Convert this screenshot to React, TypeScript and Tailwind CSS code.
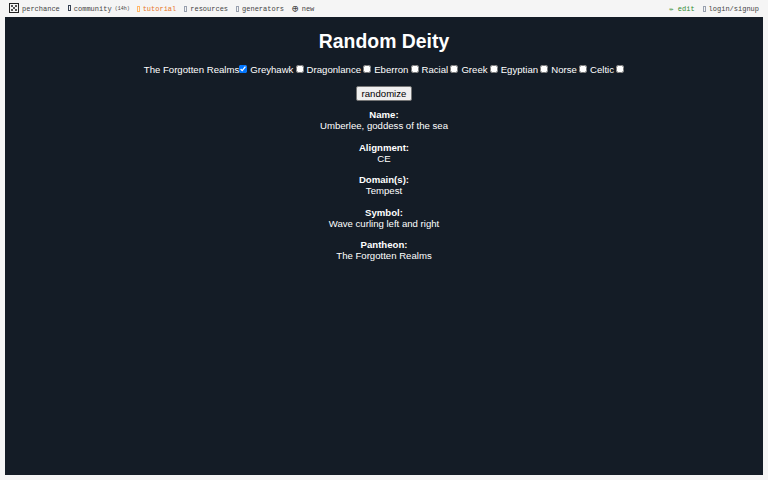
const pantheons = ['Greyhawk', 'Dragonlance', 'Eberron', 'Racial', 'Greek', 'Egyptian', 'Norse', 'Celtic'];

const details = [
  { label: 'Name:', value: 'Umberlee, goddess of the sea' },
  { label: 'Alignment:', value: 'CE' },
  { label: 'Domain(s):', value: 'Tempest' },
  { label: 'Symbol:', value: 'Wave curling left and right' },
  { label: 'Pantheon:', value: 'The Forgotten Realms' },
];

function Tofu({ className }: { className: string }) {
  return <span className={`inline-block w-[3px] h-[6px] border-[0.5px] ${className}`} />;
}

function DiceIcon() {
  return (
    <svg width="10" height="10" viewBox="0 0 10 10" className="shrink-0 -mt-[2px]">
      <rect x="0.5" y="0.5" width="9" height="9" fill="none" stroke="#222" />
      <rect x="2" y="2" width="2" height="2" fill="#555" />
      <rect x="6" y="2" width="2" height="2" fill="#555" />
      <rect x="4" y="4" width="2" height="2" fill="#555" />
      <rect x="2" y="6" width="2" height="2" fill="#555" />
      <rect x="6" y="6" width="2" height="2" fill="#555" />
    </svg>
  );
}

function TopBar() {
  return (
    <div className="h-[17px] pt-[1px] flex items-center justify-between px-[9px] text-[7px] text-[#444] font-['Liberation_Mono',monospace]">
      <div className="flex items-center">
        <DiceIcon />
        <span className="ml-[3px]">perchance</span>
        <Tofu className="ml-[8px] border-gray-700 -mt-[2px]" />
        <span className="ml-[3px]">community</span>
        <span className="ml-[3px] pt-[1px] text-[5px]">(14h)</span>
        <Tofu className="ml-[7px] border-orange-300" />
        <span className="ml-[3px] text-[#e8752a]">tutorial</span>
        <Tofu className="ml-[8px] border-gray-400" />
        <span className="ml-[3px]">resources</span>
        <Tofu className="ml-[8px] border-gray-400" />
        <span className="ml-[3px]">generators</span>
        <span className="ml-[8px] text-[11px] leading-none">⊕</span>
        <span className="ml-[3px]">new</span>
      </div>
      <div className="flex items-center">
        <span className="text-[#2e8b2e]">✏ edit</span>
        <Tofu className="ml-[8px] border-gray-400" />
        <span className="ml-[3px]">login/signup</span>
      </div>
    </div>
  );
}

export default function App() {
  return (
    <div className="w-[768px] h-[480px] bg-[#f5f5f5] overflow-hidden">
      <TopBar />
      <div className="mx-[5px] h-[458px] bg-[#141c26] text-white text-center font-['Liberation_Sans',Arial,sans-serif] text-[9.6px] leading-[11px]">
        <h1 className="pt-[13px] text-[19.4px] leading-[22px] font-bold">Random Deity</h1>
        <div className="mt-[11px] flex items-center justify-center h-[12px]">
          <span>The Forgotten Realms</span>
          <input type="checkbox" defaultChecked className="w-[8px] h-[8px] accent-[#0075ff]" />
          {pantheons.map((name) => (
            <span key={name} className="flex items-center">
              <span className="ml-[3px]">{name}</span>
              <input type="checkbox" className="ml-[2.2px] w-[8px] h-[8px]" />
            </span>
          ))}
        </div>
        <button className="mt-[11px] h-[15px] w-[56px] bg-[#efefef] text-black border border-[#767676] rounded-[2px] block mx-auto">
          randomize
        </button>
        <div className="mt-[8px] flex flex-col gap-[10.5px]">
          {details.map((d) => (
            <div key={d.label}>
              <div className="font-bold">{d.label}</div>
              <div>{d.value}</div>
            </div>
          ))}
        </div>
      </div>
    </div>
  );
}
